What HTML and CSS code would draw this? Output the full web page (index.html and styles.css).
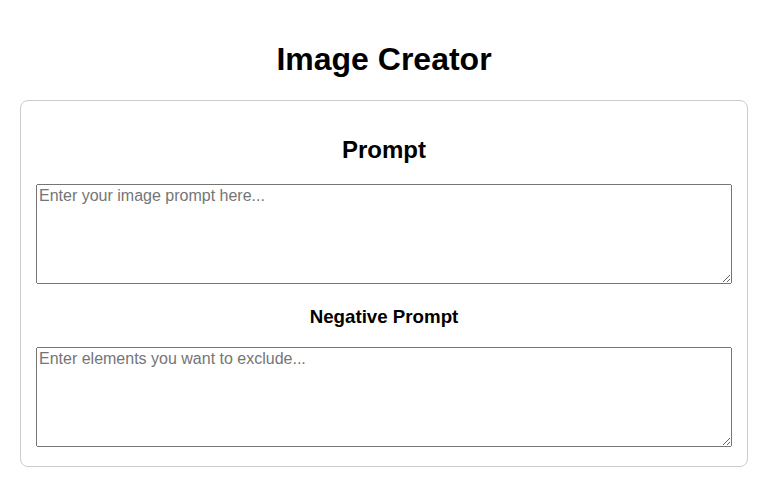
FILE: index.html
```html
<!DOCTYPE html>
<html lang="en">
<head>
  <meta charset="UTF-8" />
  <meta name="viewport" content="width=device-width, initial-scale=1.0"/>
  <title>Image Creator</title>
  <link rel="stylesheet" href="styles.css">
</head>
<body>

  <h1>Image Creator</h1>

  <div class="panel">
    <h2>Prompt</h2>
    <textarea id="prompt" placeholder="Enter your image prompt here..."></textarea>

    <h3>Negative Prompt</h3>
    <textarea id="negative" placeholder="Enter elements you want to exclude..."></textarea>
  </div>

</body>
</html>
```

FILE: styles.css
```css
body {
  margin: 0;
  padding: 20px;
  font-family: 'Liberation Sans', Arial, sans-serif;
  color: #000;
  background: #fff;
}

h1 {
  text-align: center;
}

.panel {
  border: 1px solid #ccc;
  border-radius: 8px;
  padding: 15px;
}

.panel h2,
.panel h3 {
  text-align: center;
}

textarea {
  box-sizing: border-box;
  width: 100%;
  height: 100px;
  font-family: 'Liberation Sans', Arial, sans-serif;
  font-size: 16px;
}
```
